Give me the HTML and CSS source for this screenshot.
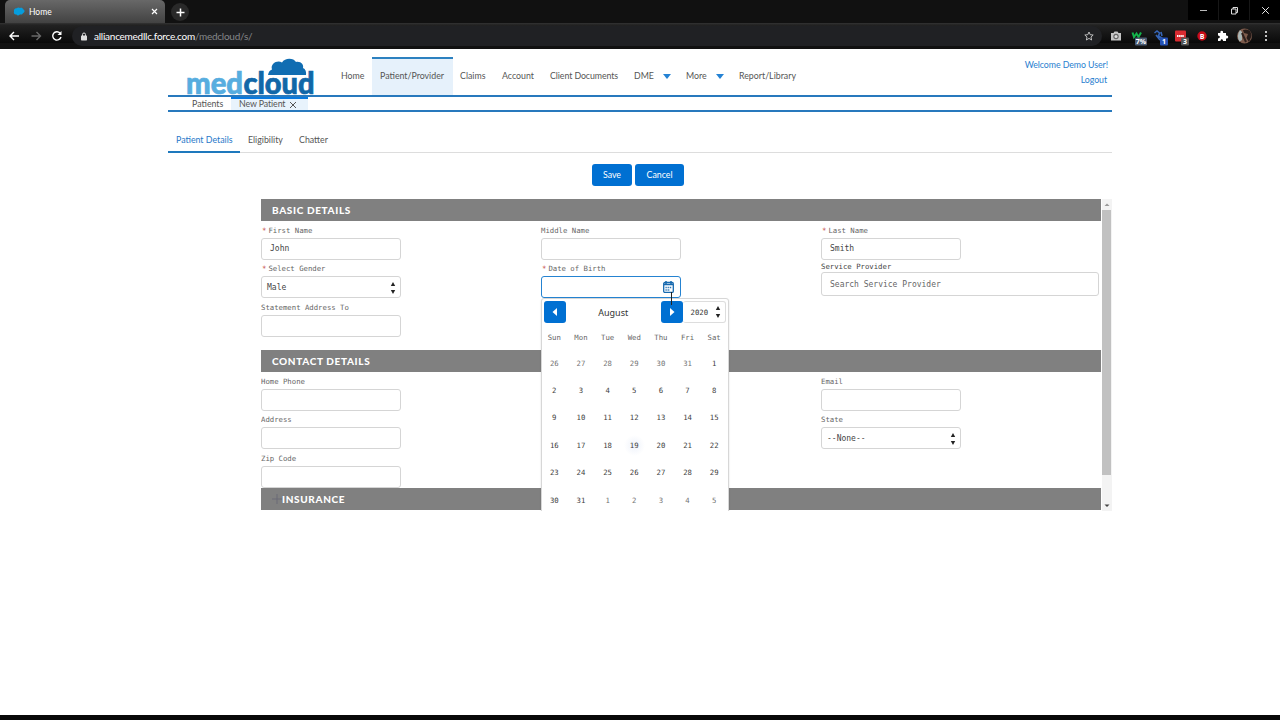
FILE: index.html
```html
<!DOCTYPE html>
<html lang="en">
<head>
<meta charset="utf-8">
<title>Home</title>
<link rel="stylesheet" href="styles.css">
</head>
<body>
<header class="browser">
  <div class="tabbar">
    <div class="tab">
      <svg class="favicon" width="12" height="9" viewBox="0 0 12 9"><path d="M1 4.500C.5 2.500 2 1 3.500 1.200C5 0 6.500.3 7 1C8.500.2 10 1 10 2.200C12 2.500 12 5.500 10 6C9.500 7.500 8 7.800 7 7.300C6 9 4 8.500 3.500 7.500C1.500 8 .3 6 1 4.500Z" fill="#069ddd"/></svg>
      <span class="tab-title">Home</span>
      <svg width="7" height="7" viewBox="0 0 7 7"><path d="M1 1L6 6M6 1L1 6" stroke="#fff" stroke-width="1.200"/></svg>
    </div>
    <div class="newtab"><svg width="9" height="9" viewBox="0 0 9 9"><path d="M4.500.5V8.500M.5 4.500H8.500" stroke="#fff" stroke-width="1.500"/></svg></div>
    <div class="wincontrols">
      <div class="win"><svg width="9" height="9" viewBox="0 0 9 9"><path d="M1 4.500H8" stroke="#bbb"/></svg></div>
      <div class="win"><svg width="9" height="9" viewBox="0 0 9 9"><path d="M1.500 3H6V8H1.500ZM3 3V1.500H7.500V6.500H6" fill="none" stroke="#ddd"/></svg></div>
      <div class="win"><svg width="9" height="9" viewBox="0 0 9 9"><path d="M1.200 1.200L7.800 7.800M7.800 1.200L1.200 7.800" stroke="#eee"/></svg></div>
    </div>
  </div>
  <div class="toolbar">
    <svg class="navicons" width="56" height="14" viewBox="0 0 56 14" fill="none" stroke="#fff" stroke-width="1.400"><path d="M11 7H2M6 3L2 7L6 11"/><path d="M23.500 7H32.500M28.500 3L32.500 7L28.500 11" stroke="#696969"/><path d="M52 4A4.200 4.200 0 1 0 53 8"/><path d="M53.500 2V6H49.500Z" fill="#fff" stroke="none"/></svg>
    <div class="address">
      <svg width="6" height="9" viewBox="0 0 6 9"><path d="M1.500 4V2.500a1.500 1.500 0 0 1 3 0V4" fill="none" stroke="#ddd"/><rect y="3.500" width="6" height="5" rx=".7" fill="#ddd"/></svg>
      <span class="url">alliancemedllc.force.com<span>/medcloud/s/</span></span>
      <svg class="star" width="10" height="10" viewBox="0 0 10 10"><path d="M5 1L6.200 3.700L9.200 4L7 6L7.600 9L5 7.400L2.400 9L3 6L.8 4L3.800 3.700Z" fill="none" stroke="#ccc" stroke-width=".9"/></svg>
    </div>
    <svg class="extensions" width="170" height="24" viewBox="0 0 170 24">
      <path d="M1 9H3.500L4.500 7.500H7.500L8.500 9H11V16.500H1Z" fill="#c4c4c4"/><circle cx="6" cy="12.500" r="2.700" fill="#666"/><circle cx="6" cy="12.500" r="1.500" fill="#ddd"/>
      <path d="M22.500 8.500L24 13L26.500 9.500L28.500 13L31 8.500" fill="none" stroke="#13b34b" stroke-width="2"/>
      <rect x="25" y="13.500" width="12" height="8" rx="1" fill="#4a5b73"/><text class="badge-text" x="31" y="20.200">7%</text>
      <path d="M44.500 9L47 7L49.500 9L48.500 12L53 15M46 11L50 16M51 8L52 12" fill="none" stroke="#3565b7" stroke-width="1.600"/>
      <rect x="50" y="13.500" width="8" height="8" rx="1" fill="#2451b5"/><text class="badge-text" x="54" y="20.200">1</text>
      <rect x="65" y="6.500" width="11" height="11" rx="1" fill="#d92b31"/><path d="M67 12H74" stroke="#fff" stroke-width="1.800" stroke-dasharray="1.500 .6"/>
      <rect x="71" y="13.500" width="8" height="8" rx="1" fill="#555"/><text class="badge-text" x="75" y="20.200">3</text>
      <circle cx="92" cy="12" r="4.700" fill="#c70c18"/><text class="badge-text" x="92" y="14.500">B</text>
      <path d="M108 9H110.500C109.500 6 114 6 113 9H116V11.500C119 11 119 15 116 14.500V17H113C113 14.500 110.500 14.500 110.500 17H108V14.500C110.500 14.500 110.500 11.500 108 11.500Z" fill="#fff"/>
      <circle cx="134.500" cy="12" r="7.500" fill="#7d5b4c"/><path d="M130 6Q126 12 129.500 17.500L132 16V8Z" fill="#aab6b5"/><path d="M133 6Q141 4 141.500 12L139 18L136.500 14L138 10L134 9Z" fill="#251b19"/><path d="M132 9L136 18" stroke="#2d201d" stroke-width="2"/>
      <g fill="#fff"><circle cx="156" cy="8" r="1"/><circle cx="156" cy="12" r="1"/><circle cx="156" cy="16" r="1"/></g>
    </svg>
  </div>
</header>

<main class="page">
  <div class="masthead">
    <svg class="logo" width="130" height="40" viewBox="0 0 130 40"><path d="M82 17C82.500 14 84 12 86 11.500C84 5 92 1.500 96 4.500C99-.8 108 0 110 4C115 3 118 7 117 10C119.500 11 120.500 14 120 17Z" fill="#106db2"/><text class="logo-text" x="0" y="35.500" fill="#57addf" stroke="#57addf" textLength="57" lengthAdjust="spacingAndGlyphs">med</text><text class="logo-text" x="57.500" y="35.500" fill="#1167a8" stroke="#1167a8" textLength="71" lengthAdjust="spacingAndGlyphs">cloud</text></svg>
    <nav class="mainnav">
      <a class="n-home">Home</a><a class="n-patient active">Patient/Provider</a><a class="n-claims">Claims</a><a class="n-account">Account</a><a class="n-docs">Client Documents</a><a class="n-dme">DME<i></i></a><a class="n-more">More<i></i></a><a>Report/Library</a>
    </nav>
    <div class="user"><a>Welcome Demo User!</a><a class="logout">Logout</a></div>
  </div>
  <div class="subnav"><a class="patients">Patients</a><a class="newpatient">New Patient <svg width="8" height="8" viewBox="0 0 8 8"><path d="M1 1L7 7M7 1L1 7" stroke="#555"/></svg></a></div>
  <div class="details-tabs"><a class="current">Patient Details</a><a>Eligibility</a><a>Chatter</a></div>
  <div class="actions"><button>Save</button><button class="cancel">Cancel</button></div>

  <div class="viewport">
    <div class="form">
      <h2><span>BASIC DETAILS</span></h2>
      <div class="columns basic">
        <div class="column">
          <label><b>*</b>First Name</label><div class="field filled">John</div>
          <label><b>*</b>Select Gender</label><div class="field select">Male<svg class="updown" width="6" height="12" viewBox="0 0 6 12"><path d="M3 0L5.200 4H.8ZM3 12L.8 8H5.200Z"/></svg></div>
          <label>Statement Address To</label><div class="field"></div>
        </div>
        <div class="column">
          <label>Middle Name</label><div class="field"></div>
          <label class="dob"><b>*</b>Date of Birth</label>
          <div class="field focused"><svg width="11" height="12" viewBox="0 0 11 12"><rect x=".7" y="1.500" width="9.600" height="10" rx="1.200" fill="#fff" stroke="#1769af" stroke-width="1.300"/><path d="M1 3.500H10M3 0V3M8 0V3" stroke="#1769af" stroke-width="1.500"/><path d="M2.500 6.500H9M2.500 9H7" stroke="#1769af" stroke-width="1.300" stroke-dasharray="1.200 .9"/></svg></div>
          <div class="calendar">
            <div class="monthbar">
              <button class="arrow"><svg width="6" height="8" viewBox="0 0 6 8"><path d="M5 0V8L.5 4Z" fill="#fff"/></svg></button><strong>August</strong><button class="arrow"><svg width="6" height="8" viewBox="0 0 6 8"><path d="M1 0V8L5.500 4Z" fill="#fff"/></svg></button>
              <div class="year">2020<svg class="updown" width="6" height="12" viewBox="0 0 6 12"><path d="M3 0L5.200 4H.8ZM3 12L.8 8H5.200Z"/></svg></div>
            </div>
            <div class="weekdays"><span>Sun</span><span>Mon</span><span>Tue</span><span>Wed</span><span>Thu</span><span>Fri</span><span>Sat</span></div>
            <div class="days">
              <span class="muted">26</span><span class="muted">27</span><span class="muted">28</span><span class="muted">29</span><span class="muted">30</span><span class="muted">31</span><span>1</span>
              <span>2</span><span>3</span><span>4</span><span>5</span><span>6</span><span>7</span><span>8</span>
              <span>9</span><span>10</span><span>11</span><span>12</span><span>13</span><span>14</span><span>15</span>
              <span>16</span><span>17</span><span>18</span><span class="today">19</span><span>20</span><span>21</span><span>22</span>
              <span>23</span><span>24</span><span>25</span><span>26</span><span>27</span><span>28</span><span>29</span>
              <span>30</span><span>31</span><span class="muted">1</span><span class="muted">2</span><span class="muted">3</span><span class="muted">4</span><span class="muted">5</span>
            </div>
          </div>
          <div class="text-cursor"></div>
        </div>
        <div class="column">
          <label><b>*</b>Last Name</label><div class="field filled">Smith</div>
          <label class="service-label">Service Provider</label><div class="field service">Search Service Provider</div>
        </div>
      </div>
      <h2><span>CONTACT DETAILS</span></h2>
      <div class="columns contact">
        <div class="column">
          <label>Home Phone</label><div class="field"></div>
          <label>Address</label><div class="field"></div>
          <label>Zip Code</label><div class="field"></div>
        </div>
        <div class="column"></div>
        <div class="column">
          <label>Email</label><div class="field"></div>
          <label>State</label><div class="field select">--None--<svg class="updown" width="6" height="12" viewBox="0 0 6 12"><path d="M3 0L5.200 4H.8ZM3 12L.8 8H5.200Z"/></svg></div>
        </div>
      </div>
      <h2 class="insurance"><svg width="10" height="10" viewBox="0 0 10 10"><path d="M5 0V10M0 5H10" stroke="#6b6b76"/></svg><span>INSURANCE</span></h2>
    </div>
    <div class="scrollbar"><svg width="11" height="11" viewBox="0 0 11 11"><path d="M5 4.500L7.500 7H2.500Z" fill="#999"/></svg><div class="thumb"></div><svg class="down" width="11" height="11" viewBox="0 0 11 11"><path d="M2.500 4.500H7.500L5 7Z" fill="#444"/></svg></div>
  </div>
</main>
<footer class="taskbar"></footer>
</body>
</html>
```

FILE: styles.css
```css
* { box-sizing: border-box; }
body { margin: 0; height: 720px; overflow: hidden; display: flex; flex-direction: column; background: #fff; color: #555; font: 8.800px/12px Lato, sans-serif; }
svg { display: block; flex: none; }
button { font: inherit; border: 0; padding: 0; }

/* browser window */
.browser { height: 49px; background: #080808; flex: none; }
.tabbar { height: 23px; display: flex; background: #111; }
.tab { width: 160px; margin-left: 5px; height: 23px; border-radius: 5px 5px 0 0; background: linear-gradient(#686868, #424242); display: flex; align-items: center; padding: 0 7px 0 8px; color: #fff; }
.tab-title { margin-left: 4px; flex: 1; font-size: 8.500px; }
.newtab { width: 18px; height: 18px; margin: 3px 0 0 6px; border-radius: 50%; background: #292929; display: grid; place-items: center; }
.wincontrols { margin-left: auto; display: flex; height: 20px; gap: 1px; background: #171717; }
.win { width: 30px; background: #000; display: grid; place-items: center; }
.toolbar { height: 26px; display: flex; align-items: center; padding-left: 8px; background: linear-gradient(#333 0, #222 2px, #090909 20px, #111 20px); }
.address { width: 1030px; height: 20px; margin-left: 8px; border-radius: 10px; background: #202124; display: flex; align-items: center; padding-left: 9px; }
.url { margin-left: 7px; color: #fff; font-size: 10px; letter-spacing: -.25px; }
.url span { color: #85878a; }
.star { margin-left: auto; margin-right: 8px; }
.extensions { margin-left: 8px; }
.badge-text { font: bold 7px "Open Sans", sans-serif; fill: #fff; text-anchor: middle; }

/* site header */
.page { width: 944px; margin-left: 168px; flex: 1; display: flex; flex-direction: column; }
.masthead { height: 48px; border-bottom: 2px solid #2879bd; display: flex; align-items: flex-start; }
.logo { margin: 9px 0 0 18px; overflow: visible; }
.logo-text { font: 900 29.500px Lato, sans-serif; stroke-width: .7px; }
.mainnav { display: flex; margin: 8px 0 0 25px; height: 38px; }
.mainnav a { height: 38px; padding-top: 13px; white-space: nowrap; display: flex; }
.n-home { width: 31px; }
.mainnav .active { width: 81px; padding-left: 8px; background: #e6f1fb; border-top: 2px solid #2c81c0; padding-top: 11px; }
.n-claims { width: 49px; padding-left: 7px; }
.n-account { width: 48px; }
.n-docs { width: 84px; letter-spacing: -.08px; }
.n-dme { width: 52px; }
.n-more { width: 53px; }
.mainnav i { border: 4px solid transparent; border-top-color: #2482d4; border-top-width: 5px; border-bottom: 0; margin: 4px 0 0 9px; height: 5px; }
.user { margin: 8px 4px 0 auto; display: flex; flex-direction: column; align-items: flex-end; line-height: 15px; color: #2980cf; letter-spacing: -.07px; }
.logout { margin-right: 1px; }
.subnav { height: 15px; border-bottom: 2px solid #2879bd; display: flex; padding-left: 24px; }
.patients { width: 39px; line-height: 14px; }
.newpatient { width: 77px; background: #e8f3fc; border-top: 2px solid #0879df; display: flex; gap: 4px; padding-left: 8px; line-height: 10px; white-space: nowrap; letter-spacing: -.1px; }
.newpatient svg { margin-top: 2px; }
.details-tabs { margin-top: 15px; height: 26px; border-bottom: 1px solid #ddd; display: flex; }
.details-tabs a { padding: 7px 8px 0; height: 26px; }
.details-tabs .current { width: 72px; white-space: nowrap; color: #2878c9; border-bottom: 2px solid #1e79bd; }
.details-tabs a:nth-child(2) { width: 51px; }
.actions { display: flex; gap: 3px; margin: 11px 0 0 424px; height: 22px; }
.actions button { width: 40px; background: #0070d2; color: #fff; border-radius: 3px; }
.actions .cancel { width: 49px; }

/* patient form */
.viewport { margin: 12.500px 0 0 93px; height: 312px; display: flex; overflow: hidden; font: 7.300px/9px "DejaVu Sans Mono", monospace; color: #666; }
.form { width: 840px; height: 312px; overflow: hidden; }
h2 { margin: 0; height: 22px; background: #808080; color: #fff; font: 900 10px/22px Lato, sans-serif; letter-spacing: .65px; padding-left: 11px; }
.columns { display: grid; grid-template-columns: 280px 280px 280px; }
.basic { height: 129px; padding-top: 5px; }
.contact { height: 116px; padding-top: 5px; }
.column { position: relative; }
label { display: block; height: 12px; white-space: pre; }
label b { color: #c23934; font-weight: normal; margin: 0 2px 0 1px; }
.field { width: 140px; height: 22px; margin-bottom: 4.500px; border: 1px solid #d5d5d5; border-radius: 3px; background: #fff; display: flex; align-items: center; font-size: 8px; color: #454545; }
.filled { padding-left: 8px; }
.select { padding: 1px 4px 0 5px; justify-content: space-between; }
.updown { fill: #222; }
.focused { border: 1.500px solid #2583d1; padding-right: 6px; justify-content: flex-end; }
.service-label { margin-top: -2px; height: 10px; color: #444; }
.service { width: 277.500px; height: 24px; padding-left: 8px; color: #666; }
.calendar { position: absolute; left: 0; top: 72.500px; width: 188px; height: 230px; background: #fff; border: 1px solid #d7d7d7; border-radius: 3px; box-shadow: 0 1px 2px #0002; padding: 2px 0 0; }
.monthbar { display: flex; align-items: center; padding-left: 2px; }
.arrow { width: 22px; height: 22px; background: #0070d2; border-radius: 3px; display: grid; place-items: center; }
.monthbar strong { width: 94.500px; text-align: center; font: 9px "Noto Sans", sans-serif; color: #333; }
.year { width: 43px; height: 22px; display: flex; align-items: center; justify-content: space-between; padding: 0 4px 0 8px; border: 1px solid #ddd; border-left: 0; border-radius: 3px; color: #333; }
.weekdays, .days { display: grid; grid-template-columns: repeat(7, 26.650px); text-align: center; margin-left: -1px; }
.weekdays { margin-top: 9px; line-height: 12px; }
.days { grid-auto-rows: 27.450px; line-height: 27px; margin-top: 5.500px; color: #3d3d3d; }
.muted { color: #737373; }
.today { background: radial-gradient(circle, #eef2fa, #fff 55%); }
.text-cursor { position: absolute; left: 130px; top: 66px; width: 1px; height: 13px; background: #222; }
.insurance { display: flex; align-items: center; }
.scrollbar { width: 11px; display: flex; flex-direction: column; background: #f3f3f3; border-left: 1px solid #fff; }
.thumb { width: 9px; height: 265px; background: #c1c1c1; }
.down { margin-top: auto; }
.taskbar { height: 5px; background: #080808; flex: none; }
```
